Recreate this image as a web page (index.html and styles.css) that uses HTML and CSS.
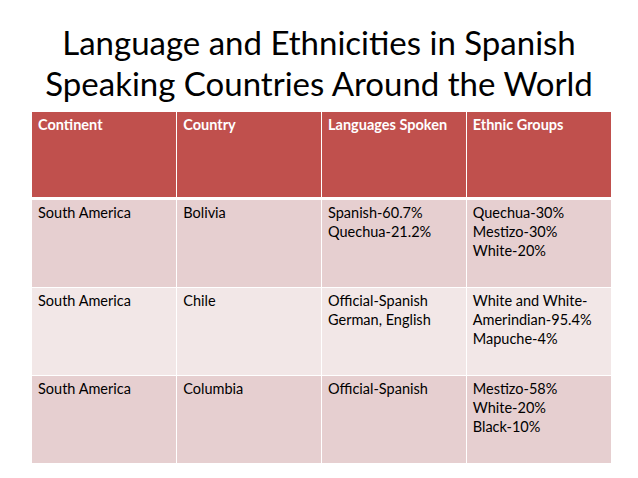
FILE: index.html
```
<!DOCTYPE html>
<html>
<head>
<meta charset="utf-8">
<link rel="stylesheet" href="styles.css">
</head>
<body>
<div class="slide">
  <h1 class="title">Language and Ethnicities in Spanish<br>Speaking Countries Around the World</h1>
  <table class="grid">
    <thead>
      <tr class="head">
        <th>Continent</th><th>Country</th><th>Languages Spoken</th><th>Ethnic Groups</th>
      </tr>
    </thead>
    <tbody>
      <tr class="band1">
        <td>South America</td><td>Bolivia</td><td>Spanish-60.7%<br>Quechua-21.2%</td><td>Quechua-30%<br>Mestizo-30%<br>White-20%</td>
      </tr>
      <tr class="band2">
        <td>South America</td><td>Chile</td><td>Official-Spanish<br>German, English</td><td>White and White-<br>Amerindian-95.4%<br>Mapuche-4%</td>
      </tr>
      <tr class="band1">
        <td>South America</td><td>Columbia</td><td>Official-Spanish</td><td>Mestizo-58%<br>White-20%<br>Black-10%</td>
      </tr>
    </tbody>
  </table>
</div>
</body>
</html>
```
FILE: styles.css
```
html, body {
  margin: 0;
  padding: 0;
  background: #ffffff;
}
.slide {
  width: 638px;
  height: 478px;
  overflow: hidden;
  font-family: Lato, "Open Sans", sans-serif;
  color: #000;
  padding-top: 22px;
  box-sizing: border-box;
}
.title {
  margin: 0;
  font-weight: 400;
  font-size: 33px;
  line-height: 41px;
  text-align: center;
  height: 90px;
}
.grid {
  margin-left: 32px;
  width: 579px;
  border-collapse: collapse;
  table-layout: fixed;
  font-size: 14.5px;
  line-height: 19px;
}
.grid th, .grid td {
  text-align: left;
  vertical-align: top;
  padding: 3px 6px 0 6px;
  border-left: 1px solid #fff;
  border-right: 1px solid #fff;
}
.grid th:first-child, .grid td:first-child {
  border-left: none;
}
.grid th:last-child, .grid td:last-child {
  border-right: none;
}
.head th {
  background: #c0504d;
  color: #fff;
  font-weight: 700;
  height: 82px;
  border-bottom: 3px solid #fff;
}
.grid tbody td {
  height: 84px;
  border-bottom: 1px solid #fff;
}
.grid tbody tr:last-child td {
  border-bottom: none;
}
.band1 td {
  background: #e6cfd0;
}
.band2 td {
  background: #f2e7e7;
}
```
